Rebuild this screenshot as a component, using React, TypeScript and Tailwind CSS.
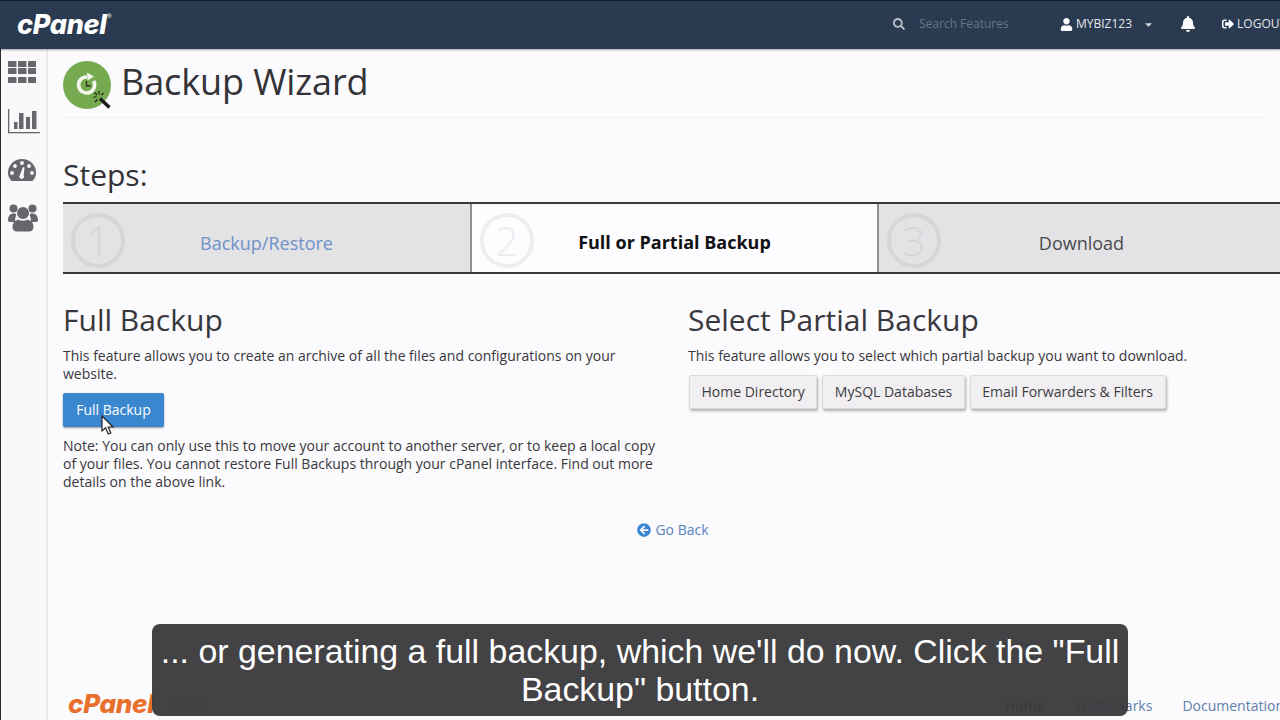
import React from 'react';
import {
  FaSearch,
  FaUser,
  FaBell,
  FaSignOutAlt,
  FaCaretDown,
  FaArrowCircleLeft,
} from 'react-icons/fa';

const Logo = ({ className }: { className: string }) => (
  <span className={`italic font-extrabold tracking-[-0.3px] font-['Inter',sans-serif] ${className}`}>cPanel</span>
);

const GridIcon = () => (
  <svg width="28" height="22" viewBox="0 0 28 22" fill="currentColor">
    {[0, 10, 20].map((x) =>
      [0, 7, 16].map((y) => <rect key={`${x}-${y}`} x={x} y={y} width="8.5" height="6" rx="0.8" />)
    )}
  </svg>
);

const BarsIcon = () => (
  <svg width="32" height="25" viewBox="0 0 32 25" fill="currentColor">
    <rect x="0" y="0" width="1.3" height="24" />
    <rect x="0" y="23" width="32" height="1.3" />
    <rect x="6" y="13" width="3.5" height="7" />
    <rect x="11" y="4" width="4.5" height="16" />
    <rect x="18" y="8" width="4" height="12" />
    <rect x="24" y="2" width="4.5" height="18" />
  </svg>
);

const GaugeIcon = () => (
  <svg width="28" height="23" viewBox="0 0 28 23" fill="currentColor">
    <path d="M3.5 22 C1.2 19.5 0 17 0 14 A14 14 0 0 1 28 14 C28 17 26.8 19.5 24.5 22 Z" />
    <g fill="#f9f8fa">
      <circle cx="14" cy="4" r="1.9" />
      <circle cx="7" cy="7" r="1.9" />
      <circle cx="21" cy="7" r="1.9" />
      <circle cx="4" cy="14" r="1.9" />
      <circle cx="24" cy="14" r="1.9" />
      <path d="M15 8 L16.6 8.4 L15.6 16 A2.4 2.4 0 1 1 12 15.8 Z" />
    </g>
  </svg>
);

const UsersIcon = () => (
  <svg width="30" height="28" viewBox="0 0 30 28" fill="currentColor">
    <circle cx="5.5" cy="4.5" r="4" />
    <circle cx="24.5" cy="4.5" r="4" />
    <path d="M0 16 C0 11 3 9.5 6 9.5 C7 9.5 8 10 8.5 10.5 C7.5 13 7 15 7 18 H2 C0.8 18 0 17.2 0 16 Z" />
    <path d="M30 16 C30 11 27 9.5 24 9.5 C23 9.5 22 10 21.5 10.5 C22.5 13 23 15 23 18 H28 C29.2 18 30 17.2 30 16 Z" />
    <circle cx="15" cy="9" r="6" />
    <path d="M4.5 23 C4.5 18 8 15.8 11 15.8 C12.5 17 17.5 17 19 15.8 C22 15.8 25.5 18 25.5 23 C25.5 26 23.5 27.5 21 27.5 H9 C6.5 27.5 4.5 26 4.5 23 Z" />
  </svg>
);

const BackupIcon = () => (
  <svg width="50" height="50" viewBox="0 0 50 50" className="shrink-0">
    <circle cx="24" cy="24" r="24" fill="#76aa50" />
    <path d="M30.5 20 A8 8 0 1 1 24 16" fill="none" stroke="#f4f6ee" strokeWidth="3.6" />
    <path d="M24 11.5 L31 15.5 L24.5 19.5 Z" fill="#f4f6ee" />
    <path d="M23.5 20 V25 H28" fill="none" stroke="#2f3a26" strokeWidth="1.4" />
    <path d="M37 37.5 L46.5 46.5" stroke="#1d1d1f" strokeWidth="3.4" />
    <path d="M36 30 V33.5 M30.5 36 H33.5 M31.5 31.5 L34 34 M40.5 32 L38.5 34 M32 41 L34.5 38.5" stroke="#1d1d1f" strokeWidth="1.2" />
  </svg>
);

const Cursor = () => (
  <svg width="16" height="22" viewBox="0 0 16 22" className="absolute left-[38px] top-[22px]">
    <path d="M1 1 L1 16 L4.6 12.8 L7.2 19 L9.8 18 L7.2 12 L12 12 Z" fill="#fff" stroke="#222" strokeWidth="1.2" />
  </svg>
);

const Step = ({ num, label, className, textClass, ringClass, divider }: { num: string; label: string; className: string; textClass: string; ringClass: string; divider?: boolean }) => (
  <div className={`relative w-[407px] shrink-0 h-full flex items-center justify-center pt-[10px] ${divider ? 'border-l-2 border-[#8f8f8f]' : ''} ${className}`}>
    <div className={`absolute left-[8px] top-[9px] w-[54px] h-[55px] rounded-full border-[4px] flex items-center justify-center text-[40px] font-light leading-none ${ringClass}`}>
      {num}
    </div>
    <span className={textClass}>{label}</span>
  </div>
);

const GreyBtn = ({ children }: { children: React.ReactNode }) => (
  <button className="h-[34px] px-[11.5px] bg-[#f1eff2] border border-[#dcdadd] rounded-[2px] shadow-[1px_2px_3px_rgba(0,0,0,0.3)] text-[14px] text-[#3c3c40]">
    {children}
  </button>
);

export default function App() {
  return (
    <div className="relative h-[720px] w-[1280px] overflow-hidden bg-[#fbfafc] font-['Open_Sans',sans-serif] text-[14px] leading-[18px] text-[#38383c] flex flex-col">
      {/* Top bar */}
      <header className="h-[49px] shrink-0 bg-[#2a3a50] border-t border-[#10182a] flex items-center pb-[2px] shadow-[0_1px_2px_rgba(0,0,0,0.35)] z-10">
        <div className="pl-[17px] w-[893px] shrink-0 flex items-start">
          <Logo className="text-[27px] leading-none text-white" />
          <span className="text-[6px] leading-none text-white mt-[2px]">®</span>
        </div>
        <FaSearch className="text-[#b5bcc6] text-[12px] shrink-0" />
        <span className="ml-[14px] w-[142px] shrink-0 text-[12px] text-[#67758a]">Search Features</span>
        <FaUser className="text-white text-[13px] -ml-[1px] shrink-0" />
        <span className="ml-[3px] text-[12px] text-[#e4e7ec]">MYBIZ123</span>
        <FaCaretDown className="ml-[11px] text-[#d3d7dd] text-[11px] shrink-0" />
        <FaBell className="ml-[26px] text-white text-[16px] shrink-0" />
        <FaSignOutAlt className="ml-[26px] text-white text-[12px] shrink-0" />
        <span className="ml-[3px] text-[12px] text-[#e4e7ec] whitespace-nowrap">LOGOUT</span>
      </header>

      <div className="flex flex-1 min-h-0">
        {/* Sidebar */}
        <aside className="w-[48px] shrink-0 bg-[#f9f8fa] border-l border-[#2b2b30] border-r-2 border-r-[#e9e8eb] flex flex-col items-start pt-[12px] pl-[7px] text-[#66666b]">
          <GridIcon />
          <div className="mt-[26px]"><BarsIcon /></div>
          <div className="mt-[25px]"><GaugeIcon /></div>
          <div className="mt-[22px]"><UsersIcon /></div>
        </aside>

        {/* Main */}
        <main className="flex-1 min-w-0 pl-[15px] flex flex-col">
          <div className="flex items-start gap-[8px] pt-[12px] h-[69px] border-b border-[#f0eff2] mr-[15px]">
            <BackupIcon />
            <h1 className="text-[36px] leading-[42px] tracking-[-0.1px] text-[#333337] whitespace-nowrap">Backup Wizard</h1>
          </div>

          <h2 className="mt-[37px] text-[30px] leading-[40px] text-[#333337]">Steps:</h2>

          <div className="mt-[7px] h-[72px] w-[1240px] flex shrink-0 border-t-2 border-b-2 border-[#3a3a3e]">
            <Step num="1" label="Backup/Restore" className="bg-[#e3e2e5]" ringClass="border-[#d6d6d8] text-[#d6d6d8]" textClass="text-[18px] text-[#6f93c8]" />
            <Step num="2" label="Full or Partial Backup" divider className="bg-[#fdfcfe]" ringClass="border-[#eeedf0] text-[#eeedf0]" textClass="text-[18px] font-bold text-[#111114] -mt-[2px]" />
            <Step num="3" label="Download" divider className="bg-[#e3e2e5]" ringClass="border-[#d6d6d8] text-[#d6d6d8]" textClass="text-[18px] text-[#4a4a4e]" />
          </div>

          <div className="mt-[26px] flex">
            <section className="w-[625px] shrink-0 pr-[30px]">
              <h2 className="text-[30px] leading-[40px] text-[#38383c]">Full Backup</h2>
              <p className="mt-[7px]">This feature allows you to create an archive of all the files and configurations on your website.</p>
              <button className="relative mt-[10px] block h-[34px] w-[101px] rounded-[2px] bg-[#3a87d0] text-[14px] text-white shadow-[0_1px_2px_rgba(0,0,0,0.4)]">
                Full Backup
                <Cursor />
              </button>
              <p className="mt-[10px]">
                Note: You can only use this to move your account to another server, or to keep a local copy of your files. You cannot restore Full Backups through your cPanel interface. Find out more details on the above link.
              </p>
            </section>
            <section className="flex-1 min-w-0">
              <h2 className="text-[30px] leading-[40px] text-[#38383c] whitespace-nowrap">Select Partial Backup</h2>
              <p className="mt-[7px]">This feature allows you to select which partial backup you want to download.</p>
              <div className="mt-[10px] flex gap-[5px] pl-px">
                <GreyBtn>Home Directory</GreyBtn>
                <GreyBtn>MySQL Databases</GreyBtn>
                <GreyBtn>Email Forwarders &amp; Filters</GreyBtn>
              </div>
            </section>
          </div>

          <div className="mt-[30px] w-[1220px] flex items-center justify-center gap-[4px] text-[#5a84bd]">
            <FaArrowCircleLeft className="text-[#3a87d0] text-[14px]" />
            <span>Go Back</span>
          </div>

          {/* Footer */}
          <footer className="mt-auto h-[30px] flex items-center pl-[5px] pb-[2px]">
            <Logo className="text-[26px] leading-none text-[#e8702c]" />
            <span className="ml-[17px] text-[9px] text-[#8a8a8e]">54.0.23</span>
            <div className="ml-auto mt-[4px] flex gap-[30px] text-[#5f7fae] whitespace-nowrap -mr-[4px]">
              <span className="text-[#3a3a3e]">Home</span>
              <span>Trademarks</span>
              <span>Documentation</span>
            </div>
          </footer>
        </main>
      </div>

      {/* Video caption */}
      <div className="absolute left-[152px] top-[624px] w-[976px] h-[92px] rounded-[8px] bg-[#39383a]/95 px-[6px] pt-[8px] text-center font-['Liberation_Sans',sans-serif] text-[33.9px] leading-[38px] text-white z-20">
        ... or generating a full backup, which we'll do now. Click the "Full Backup" button.
      </div>
    </div>
  );
}
